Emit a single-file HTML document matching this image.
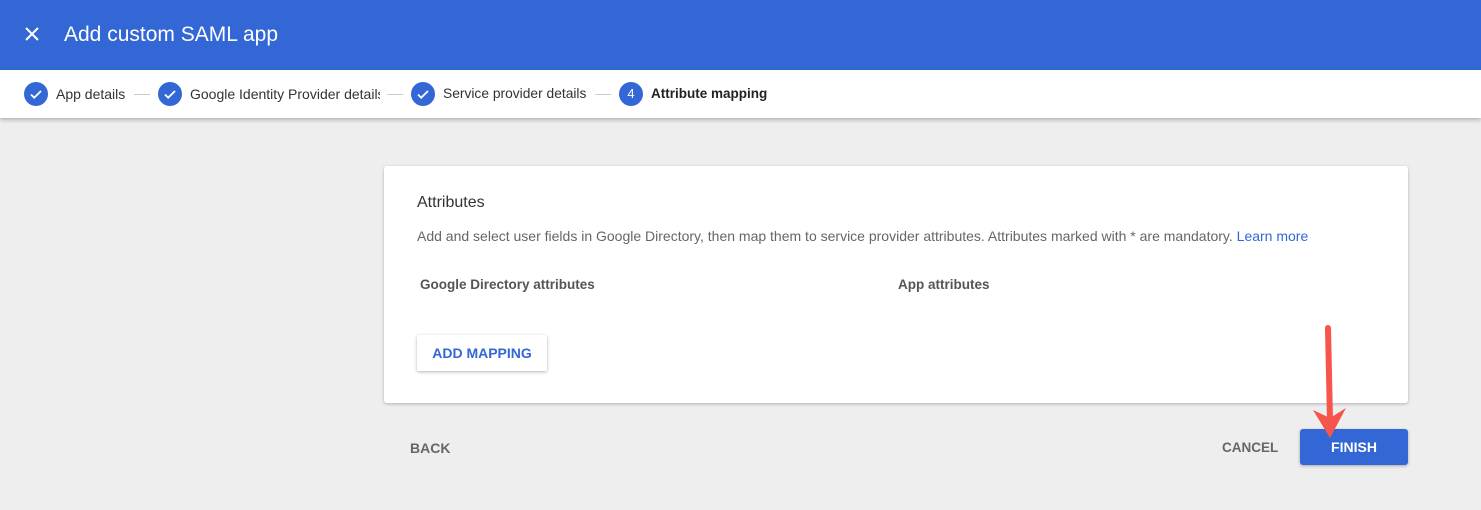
<!DOCTYPE html>
<html><head><style>
body{margin:0;width:1481px;height:510px;background:#eeeeee;font-family:"Liberation Sans",sans-serif;position:relative;overflow:hidden}
.hdr{position:absolute;left:0;top:0;width:1481px;height:70px;background:#3367d6;color:#fff}
.hdr .t{position:absolute;left:64px;top:23px;font-size:21px}
.step{position:absolute;top:70px;left:0;width:1481px;height:48px;background:#fff;box-shadow:0 2px 4px rgba(0,0,0,.25)}
.c{position:absolute;top:12px;width:24px;height:24px;border-radius:50%;background:#3367d6;color:#fff;font-size:13px;text-align:center;line-height:24px}
.l{position:absolute;top:16px;font-size:14px;color:#333;white-space:nowrap}
.d{position:absolute;top:24px;height:1px;width:16px;background:#ccc}
.card{position:absolute;left:384px;top:166px;width:1024px;height:237px;background:#fff;border-radius:3px;box-shadow:0 1px 3px rgba(0,0,0,.25)}
.btn{position:absolute;font-size:14px;font-weight:bold;text-align:center}
</style></head><body>
<div class="hdr">
<svg style="position:absolute;left:24px;top:26px" width="16" height="16" viewBox="0 0 16 16"><path d="M2 2L14 14M14 2L2 14" stroke="#fff" stroke-width="2"/></svg>
<div class="t">Add custom SAML app</div></div>
<div class="step">
<div class="c" style="left:24px"><svg width="24" height="24" viewBox="0 0 24 24"><path d="M7 12.5l3.2 3.2L17 9" stroke="#fff" stroke-width="1.8" fill="none"/></svg></div>
<div class="l" style="left:56px">App details</div><div class="d" style="left:134px"></div>
<div class="c" style="left:158px"><svg width="24" height="24" viewBox="0 0 24 24"><path d="M7 12.5l3.2 3.2L17 9" stroke="#fff" stroke-width="1.8" fill="none"/></svg></div>
<div class="l" style="left:190px;width:190px;overflow:hidden">Google Identity Provider details</div><div class="d" style="left:387px"></div>
<div class="c" style="left:411px"><svg width="24" height="24" viewBox="0 0 24 24"><path d="M7 12.5l3.2 3.2L17 9" stroke="#fff" stroke-width="1.8" fill="none"/></svg></div>
<div class="l" style="left:443px;font-size:13.8px">Service provider details</div><div class="d" style="left:595px"></div>
<div class="c" style="left:619px">4</div>
<div class="l" style="left:651px;font-weight:bold;color:#222;font-size:13.5px">Attribute mapping</div>
</div>
<div class="card">
<div style="position:absolute;left:33px;top:28px;font-size:16px;color:#333">Attributes</div>
<div style="position:absolute;left:33px;top:62px;font-size:14px;color:#666">Add and select user fields in Google Directory, then map them to service provider attributes. Attributes marked with * are mandatory. <span style="color:#3367d6">Learn more</span></div>
<div style="position:absolute;left:36px;top:111px;font-size:13.5px;font-weight:bold;color:#555">Google Directory attributes</div>
<div style="position:absolute;left:514px;top:111px;font-size:13.5px;font-weight:bold;color:#555">App attributes</div>
<div class="btn" style="left:33px;top:169px;width:130px;height:36px;line-height:36px;color:#3367d6;background:#fff;border-radius:2px;box-shadow:0 1px 3px rgba(0,0,0,.3)">ADD MAPPING</div>
</div>
<div class="btn" style="left:410px;top:440px;color:#666">BACK</div>
<div class="btn" style="left:1222px;top:440px;color:#666;font-size:13.5px">CANCEL</div>
<div class="btn" style="left:1300px;top:429px;width:108px;height:36px;line-height:36px;background:#3367d6;color:#fff;border-radius:3px;box-shadow:0 1px 3px rgba(0,0,0,.3)">FINISH</div>
<svg style="position:absolute;left:0;top:0" width="1481" height="510"><path d="M1328 328L1330 420" stroke="#f5554a" stroke-width="6" stroke-linecap="round"/><path d="M1313 410L1330 438L1346 408L1330 418Z" fill="#f5554a"/></svg>
</body></html>
